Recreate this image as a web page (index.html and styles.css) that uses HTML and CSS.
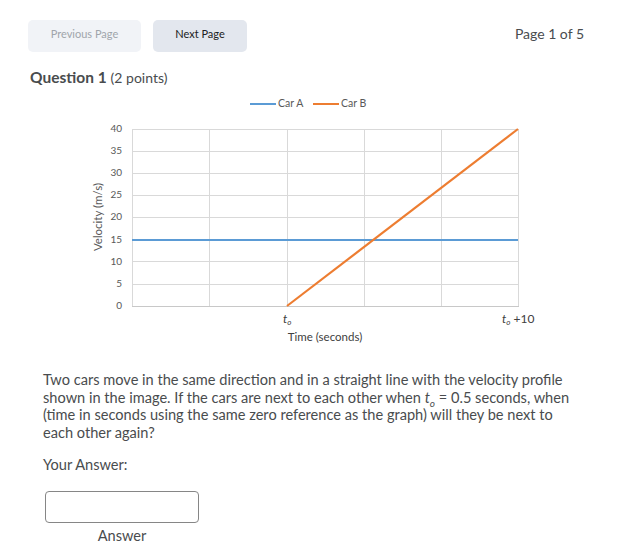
FILE: index.html
```html
<!DOCTYPE html>
<html lang="en">
<head>
<meta charset="utf-8">
<title>Question 1</title>
<link rel="stylesheet" href="styles.css">
</head>
<body>
<div class="page">
  <div class="topbar">
    <div class="nav">
      <button class="btn btn-disabled" type="button">Previous Page</button>
      <button class="btn btn-next" type="button">Next Page</button>
    </div>
    <div class="pageinfo">Page 1 of 5</div>
  </div>

  <h2 class="qtitle"><strong>Question 1</strong> <span class="points">(2 points)</span></h2>

  <svg class="chart" width="460" height="260" viewBox="80 90 460 260" xmlns="http://www.w3.org/2000/svg">
    <g class="legend">
      <line x1="250" y1="103" x2="276" y2="103" stroke="#5b9bd5" stroke-width="2"/>
      <text x="278" y="103" class="ctext" dominant-baseline="middle">Car A</text>
      <line x1="313" y1="103" x2="339" y2="103" stroke="#ed7d31" stroke-width="2"/>
      <text x="341" y="103" class="ctext" dominant-baseline="middle">Car B</text>
    </g>
    <g stroke="#d9d9d9" stroke-width="1">
      <line x1="132" y1="128.5" x2="518" y2="128.5"/>
      <line x1="132" y1="150.5" x2="518" y2="150.5"/>
      <line x1="132" y1="172.5" x2="518" y2="172.5"/>
      <line x1="132" y1="194.5" x2="518" y2="194.5"/>
      <line x1="132" y1="216.5" x2="518" y2="216.5"/>
      <line x1="132" y1="238.5" x2="518" y2="238.5"/>
      <line x1="132" y1="260.5" x2="518" y2="260.5"/>
      <line x1="132" y1="283.5" x2="518" y2="283.5"/>
      <line x1="132.5" y1="128" x2="132.5" y2="305"/>
      <line x1="209.5" y1="128" x2="209.5" y2="305"/>
      <line x1="287.5" y1="128" x2="287.5" y2="305"/>
      <line x1="364.5" y1="128" x2="364.5" y2="305"/>
      <line x1="441.5" y1="128" x2="441.5" y2="305"/>
      <line x1="518.5" y1="128" x2="518.5" y2="305"/>
    </g>
    <line x1="132" y1="305.5" x2="519" y2="305.5" stroke="#c8c8c8" stroke-width="1.2"/>
    <g class="ctext tick" text-anchor="end">
      <text x="122" y="128" dominant-baseline="middle">40</text>
      <text x="122" y="150" dominant-baseline="middle">35</text>
      <text x="122" y="172" dominant-baseline="middle">30</text>
      <text x="122" y="194" dominant-baseline="middle">25</text>
      <text x="122" y="216" dominant-baseline="middle">20</text>
      <text x="122" y="239" dominant-baseline="middle">15</text>
      <text x="122" y="261" dominant-baseline="middle">10</text>
      <text x="122" y="283" dominant-baseline="middle">5</text>
      <text x="122" y="305" dominant-baseline="middle">0</text>
    </g>
    <text class="ytitle" x="99" y="216" text-anchor="middle" dominant-baseline="middle" transform="rotate(-90 99 216)">Velocity (m/s)</text>
    <line x1="132" y1="239" x2="518" y2="239" stroke="#5b9bd5" stroke-width="2.2"/>
    <line x1="287" y1="305" x2="518" y2="128" stroke="#ed7d31" stroke-width="2.2"/>
    <text class="ttext" x="283" y="322"><tspan font-style="italic">t</tspan><tspan font-style="italic" font-size="8" dy="2">o</tspan></text>
    <text class="ttext" x="502" y="322"><tspan font-style="italic">t</tspan><tspan font-style="italic" font-size="8" dy="2">o</tspan><tspan dy="-2"> +10</tspan></text>
    <text class="atext" x="325" y="337" text-anchor="middle" dominant-baseline="middle">Time (seconds)</text>
  </svg>

  <p class="question">Two cars move in the same direction and in a straight line with the velocity profile shown in the image. If the cars are next to each other when <i>t</i><sub><i>o</i></sub> = 0.5 seconds, when (time in seconds using the same zero reference as the graph) will they be next to each other again?</p>

  <p class="label">Your Answer:</p>

  <div class="answer">
    <input class="answer-input" type="text" aria-label="Answer">
    <div class="answer-caption">Answer</div>
  </div>
</div>
</body>
</html>
```

FILE: styles.css
```css
html, body {
  margin: 0;
  padding: 0;
  background: #ffffff;
}

body {
  font-family: Lato, "Open Sans", sans-serif;
  color: #494c4e;
}

.page {
  width: 621px;
  box-sizing: border-box;
  padding: 20px 37px 0 28px;
}

.topbar {
  display: flex;
  justify-content: space-between;
  align-items: flex-start;
}

.nav {
  display: flex;
  gap: 12px;
}

.btn {
  height: 32px;
  border: none;
  border-radius: 5px;
  font-family: Lato, sans-serif;
  font-size: 11px;
  padding: 0 0 6px 0;
  cursor: pointer;
}

.btn-disabled {
  width: 113px;
  background: #f1f3f7;
  color: #a0a5ab;
}

.btn-next {
  width: 94px;
  background: #e3e7ee;
  color: #202122;
}

.pageinfo {
  font-size: 14px;
  line-height: 18px;
  color: #494c4e;
  margin-top: 5px;
}

.qtitle {
  margin: 15px 0 0 2px;
  font-size: 15.5px;
  line-height: 20px;
  font-weight: normal;
  color: #494c4e;
}

.qtitle strong {
  font-weight: 700;
}

.points {
  font-size: 14px;
}

.chart {
  display: block;
  margin: 3px 0 0 52px;
}

.ctext {
  font-family: Lato, sans-serif;
  font-size: 10.5px;
  fill: #595959;
}

.tick {
  font-size: 10px;
}

.ytitle {
  font-family: Lato, sans-serif;
  font-size: 11.5px;
  fill: #595959;
}

.ttext {
  font-family: Lato, sans-serif;
  font-size: 12px;
  fill: #404040;
}

.atext {
  font-family: Lato, sans-serif;
  font-size: 11.5px;
  fill: #404040;
}

.question {
  margin: 20px 0 0 15px;
  font-size: 14.6px;
  line-height: 17.6px;
  color: #494c4e;
  width: 534px;
}

.question sub {
  font-size: 10px;
  line-height: 0;
}

.label {
  margin: 15px 0 0 15px;
  font-size: 14.6px;
  line-height: 18px;
}

.answer {
  margin: 17px 0 0 17px;
  width: 154px;
  display: flex;
  flex-direction: column;
  align-items: center;
}

.answer-input {
  width: 154px;
  height: 32px;
  box-sizing: border-box;
  border: 1px solid #868686;
  border-radius: 4px;
  background: #ffffff;
  font-family: Lato, sans-serif;
  font-size: 14px;
  padding: 0 8px;
}

.answer-caption {
  margin-top: 4px;
  font-size: 14.6px;
  line-height: 18px;
  color: #494c4e;
}
```
